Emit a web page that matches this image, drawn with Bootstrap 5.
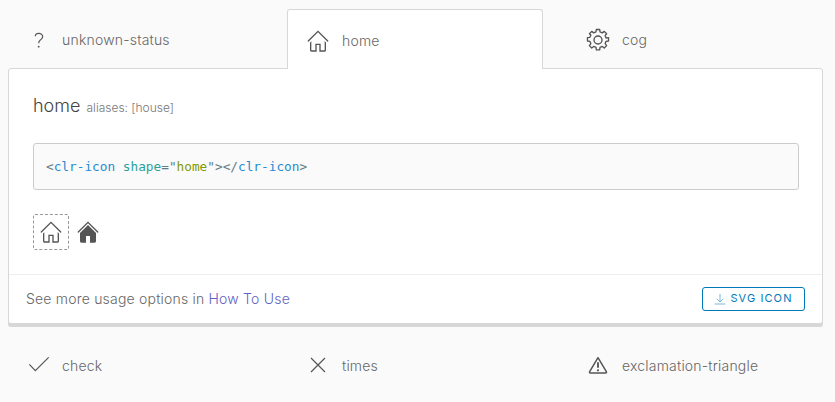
<!DOCTYPE html>
<html lang="en">
<head>
<meta charset="utf-8">
<title>Icons</title>
<link href="https://cdn.jsdelivr.net/npm/bootstrap@5.3.0/dist/css/bootstrap.min.css" rel="stylesheet">
<style>
html,body{height:100%;}
body{background:#fafafa;color:#666;font-family:Inter,"Open Sans",sans-serif;font-weight:300;font-size:14px;letter-spacing:.2px;overflow:hidden;width:835px;height:402px;}
.icon-strip{padding-left:7px;gap:24px;}
.strip-top{padding-top:9px;height:69px;}
.strip-bottom{padding-top:17px;}
.icon-cell{width:256px;height:59px;padding-left:19px;padding-top:2px;gap:12px;color:#666;}
.strip-bottom .icon-cell{height:48px;padding-top:0;}
.icon-cell svg{width:24px;height:24px;flex:none;}
.icon-cell.is-open{background:#fff;border:1px solid #d7d7d7;border-bottom:0;border-radius:3px 3px 0 0;position:relative;z-index:2;height:60px;padding-left:18px;padding-top:2px;}
.detail-panel{width:815px;height:256px;margin-left:8px;background:#fff;border:1px solid #d7d7d7;border-radius:3px;box-shadow:0 3px 0 #d7d7d7;margin-top:-1px;position:relative;}
.panel-body{padding:24px 23px 0 24px;height:205px;}
.icon-title{font-size:18px;line-height:26px;color:#444;margin:0;font-weight:300;letter-spacing:0;}
.icon-title small{font-size:12px;color:#777;margin-left:1px;letter-spacing:0;}
.code-box{height:47px;margin-top:22px;background:#fafafa;border:1px solid #ccc;border-radius:3px;padding:0 12px;font-family:"DejaVu Sans Mono","Liberation Mono",monospace;font-size:12.75px;font-weight:400;letter-spacing:0;color:#565656;line-height:45px;}
.tk-tag{color:#268bd2;}.tk-attr{color:#2aa198;}.tk-val{color:#859900;}.tk-p{color:#657b83;}
.variant-row{margin-top:24px;gap:1px;}
.variant{width:36px;height:36px;display:flex;align-items:center;justify-content:center;border:1px dashed transparent;}
.variant.is-picked{border-color:#999;border-radius:2px;}
.variant svg{width:24px;height:24px;}
.panel-foot{height:50px;border-top:1px solid #eee;padding:0 17px 2px 17px;font-size:14px;}
.panel-foot a{color:#5f62c4;text-decoration:none;}
.svg-btn{height:24px;width:103px;border:1px solid #0079b8;border-radius:3px;color:#0079b8;background:#fff;font-size:11px;font-weight:400;letter-spacing:1.1px;padding:0;gap:4px;}
.svg-btn svg{width:12px;height:12px;}
</style>
</head>
<body>
<div class="d-flex icon-strip strip-top">
  <div class="d-flex align-items-center icon-cell">
    <svg viewBox="0 0 36 36" fill="none" stroke="#555" stroke-width="1.800"><path d="M14 12.500C14 9.500 16 8 19 8s6 2 6 5c0 2.500-1.500 3.500-3.500 5s-2.500 2.500-2.500 5"/><circle cx="19" cy="28" r="1.400" fill="#555" stroke="none"/></svg>
    <span>unknown-status</span>
  </div>
  <div class="d-flex align-items-center icon-cell is-open">
    <svg viewBox="0 0 36 36" fill="#555"><path d="M33.310 17.400 18 2.090 2.690 17.400a1 1 0 0 0 1.410 1.410L18 4.910l13.900 13.900a1 1 0 0 0 1.410-1.410Z"/><path d="M28 32h-6V22h-8v10H8V18.250l-2 2V32a2 2 0 0 0 2 2h8V24h4v10h8a2 2 0 0 0 2-2V20.170l-2-2Z"/></svg>
    <span>home</span>
  </div>
  <div class="d-flex align-items-center icon-cell">
    <svg viewBox="0 0 36 36" fill="none" stroke="#555" stroke-width="2" stroke-linejoin="round"><path d="M14.980 5.870 15.500 2.200h5l.52 3.670L24.440 7.290 27.400 5.060l3.540 3.540-2.230 2.960 1.420 3.420 3.670-.48v5l-3.670.52-1.420 3.420 2.230 2.960-3.540 3.540-2.960-2.230-3.420 1.420-.52 3.670h-5l-.52-3.670-3.420-1.420-2.960 2.230-3.540-3.540 2.230-2.960-1.420-3.420-3.670-.52v-5l3.670-.52 1.420-3.420L5.060 8.600 8.600 5.060l2.960 2.230z"/><circle cx="18" cy="18" r="6"/></svg>
    <span>cog</span>
  </div>
</div>
<div class="detail-panel">
  <div class="panel-body">
    <h2 class="icon-title">home <small>aliases: [house]</small></h2>
    <div class="code-box"><span class="tk-p">&lt;</span><span class="tk-tag">clr-icon</span> <span class="tk-attr">shape</span><span class="tk-p">=</span><span class="tk-p">"</span><span class="tk-val">home</span><span class="tk-p">"&gt;&lt;/</span><span class="tk-tag">clr-icon</span><span class="tk-p">&gt;</span></div>
    <div class="d-flex variant-row">
      <div class="variant is-picked"><svg viewBox="0 0 36 36" fill="#555"><path d="M33.310 17.400 18 2.090 2.690 17.400a1 1 0 0 0 1.410 1.410L18 4.910l13.900 13.900a1 1 0 0 0 1.410-1.410Z"/><path d="M28 32h-6V22h-8v10H8V18.250l-2 2V32a2 2 0 0 0 2 2h8V24h4v10h8a2 2 0 0 0 2-2V20.170l-2-2Z"/></svg></div>
      <div class="variant"><svg viewBox="0 0 36 36" fill="#555"><path d="M33.310 17.400 18 2.090 2.690 17.400a1 1 0 0 0 1.410 1.410L18 4.910l13.900 13.900a1 1 0 0 0 1.410-1.410Z"/><path d="M18 7.500 6 19.500V32a2 2 0 0 0 2 2h7V24h6v10h7a2 2 0 0 0 2-2V19.500Z"/></svg></div>
    </div>
  </div>
  <div class="d-flex align-items-center justify-content-between panel-foot">
    <span>See more usage options in <a href="#">How To Use</a></span>
    <button type="button" class="btn d-flex align-items-center justify-content-center svg-btn"><svg viewBox="0 0 36 36" fill="none" stroke="#6fb3d6" stroke-width="2.800"><path d="M18 3v24M8 17l10 10 10-10M2 33h32"/></svg>SVG ICON</button>
  </div>
</div>
<div class="d-flex icon-strip strip-bottom">
  <div class="d-flex align-items-center icon-cell">
    <svg viewBox="0 0 36 36" fill="none" stroke="#555" stroke-width="1.800"><path d="M5 17l9 9.500L34 6.500"/></svg>
    <span>check</span>
  </div>
  <div class="d-flex align-items-center icon-cell">
    <svg viewBox="0 0 36 36" fill="none" stroke="#555" stroke-width="1.800"><path d="M7.500 7.500l21 21M28.500 7.500l-21 21"/></svg>
    <span>times</span>
  </div>
  <div class="d-flex align-items-center icon-cell">
    <svg viewBox="0 0 36 36" fill="none" stroke="#555" stroke-width="2.200" stroke-linejoin="round"><path d="M18 7 5.500 28c-.6 1-.1 2 1 2h23c1.100 0 1.600-1 1-2z"/><path d="M18 14v8" stroke-width="2.800"/><circle cx="18" cy="26" r="1.600" fill="#555" stroke="none"/></svg>
    <span>exclamation-triangle</span>
  </div>
</div>
</body>
</html>
